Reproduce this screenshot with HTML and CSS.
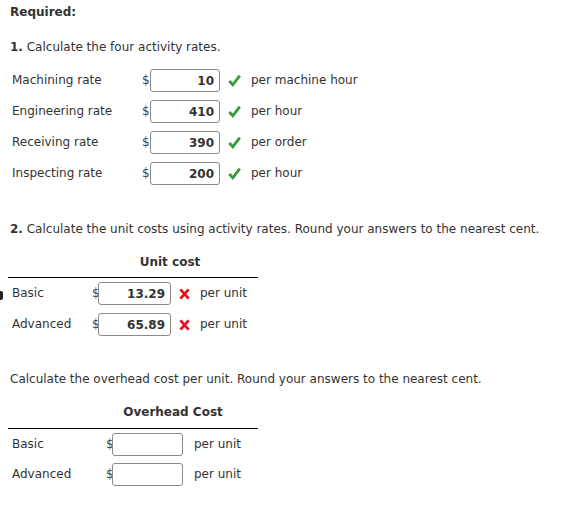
FILE: index.html
```
<!DOCTYPE html>
<html lang="en">
<head>
    <meta charset="UTF-8">
    <title>Required</title>
    <link rel="stylesheet" href="styles.css">
</head>
<body>
    <div class="question">
        <p class="required">Required:</p>

        <p class="part part-one"><b>1.</b> Calculate the four activity rates.</p>

        <div class="rates">
            <div class="rate-row">
                <span class="label">Machining rate</span>
                <span class="dollar">$</span>
                <input class="answer" type="text" value="10">
                <span class="mark"><svg width="13" height="13" viewBox="0 0 13 13"><path d="M1.3 7 L4.8 10.8 L11.8 1.6" fill="none" stroke="#3b9a3b" stroke-width="2.8"/></svg></span>
                <span class="unit">per machine hour</span>
            </div>
            <div class="rate-row">
                <span class="label">Engineering rate</span>
                <span class="dollar">$</span>
                <input class="answer" type="text" value="410">
                <span class="mark"><svg width="13" height="13" viewBox="0 0 13 13"><path d="M1.3 7 L4.8 10.8 L11.8 1.6" fill="none" stroke="#3b9a3b" stroke-width="2.8"/></svg></span>
                <span class="unit">per hour</span>
            </div>
            <div class="rate-row">
                <span class="label">Receiving rate</span>
                <span class="dollar">$</span>
                <input class="answer" type="text" value="390">
                <span class="mark"><svg width="13" height="13" viewBox="0 0 13 13"><path d="M1.3 7 L4.8 10.8 L11.8 1.6" fill="none" stroke="#3b9a3b" stroke-width="2.8"/></svg></span>
                <span class="unit">per order</span>
            </div>
            <div class="rate-row">
                <span class="label">Inspecting rate</span>
                <span class="dollar">$</span>
                <input class="answer" type="text" value="200">
                <span class="mark"><svg width="13" height="13" viewBox="0 0 13 13"><path d="M1.3 7 L4.8 10.8 L11.8 1.6" fill="none" stroke="#3b9a3b" stroke-width="2.8"/></svg></span>
                <span class="unit">per hour</span>
            </div>
        </div>

        <p class="part part-two"><b>2.</b> Calculate the unit costs using activity rates. Round your answers to the nearest cent.</p>

        <div class="cost-table unit-cost">
            <span class="edge-mark"></span>
            <div class="cost-head"><span class="head-text">Unit cost</span></div>
            <div class="cost-row">
                <span class="label">Basic</span>
                <span class="dollar">$</span>
                <input class="answer" type="text" value="13.29">
                <span class="mark"><svg width="11" height="12" viewBox="0 0 11 12"><path d="M1.4 1.4 L9.6 10.6 M9.6 1.4 L1.4 10.6" fill="none" stroke="#e8121b" stroke-width="2.8"/></svg></span>
                <span class="unit">per unit</span>
            </div>
            <div class="cost-row">
                <span class="label">Advanced</span>
                <span class="dollar">$</span>
                <input class="answer" type="text" value="65.89">
                <span class="mark"><svg width="11" height="12" viewBox="0 0 11 12"><path d="M1.4 1.4 L9.6 10.6 M9.6 1.4 L1.4 10.6" fill="none" stroke="#e8121b" stroke-width="2.8"/></svg></span>
                <span class="unit">per unit</span>
            </div>
        </div>

        <p class="part part-three">Calculate the overhead cost per unit. Round your answers to the nearest cent.</p>

        <div class="cost-table overhead-cost">
            <div class="cost-head"><span class="head-text">Overhead Cost</span></div>
            <div class="cost-row">
                <span class="label">Basic</span>
                <span class="dollar">$</span>
                <input class="answer" type="text" value="">
                <span class="unit">per unit</span>
            </div>
            <div class="cost-row">
                <span class="label">Advanced</span>
                <span class="dollar">$</span>
                <input class="answer" type="text" value="">
                <span class="unit">per unit</span>
            </div>
        </div>
    </div>
</body>
</html>
```

FILE: styles.css
```
body {
    margin: 0;
    padding: 0;
    background: #fff;
    font-family: "DejaVu Sans", Verdana, sans-serif;
    font-size: 12px;
    line-height: 15px;
    color: #333;
}
.question {
    padding: 5px 10px 0 10px;
}
p {
    margin: 0;
}
.required {
    font-weight: bold;
}
.part-one {
    margin-top: 20px;
}
.part-two {
    margin-top: 33px;
}
.part-three {
    margin-top: 32px;
}
.rates {
    margin-top: 10px;
    padding-left: 2px;
}
.rate-row {
    display: grid;
    grid-template-columns: 130px 8px 70px 31px auto;
    align-items: center;
    height: 31px;
}
.dollar {
    color: #444;
}
.unit {
    white-space: nowrap;
}
.answer {
    box-sizing: border-box;
    width: 70px;
    height: 23px;
    margin: 0;
    padding: 0 5px;
    border: 1px solid #8a8a8a;
    border-radius: 3px;
    font-family: "DejaVu Sans", Verdana, sans-serif;
    font-size: 12px;
    font-weight: bold;
    color: #333;
    text-align: right;
    background: #fff;
}
.mark {
    display: flex;
    justify-content: center;
    padding-right: 2px;
}
.mark svg {
    display: block;
}
.cost-table {
    position: relative;
    width: 250px;
    margin-left: -2px;
    padding-top: 18px;
}
.cost-head {
    display: flex;
    justify-content: center;
    padding-bottom: 7px;
    border-bottom: 1px solid #000;
    font-weight: bold;
}
.unit-cost .cost-head {
    padding-left: 74px;
}
.cost-row {
    display: grid;
    align-items: center;
    height: 31px;
    padding-left: 4px;
}
.unit-cost .cost-row {
    grid-template-columns: 80px 6px 73px 29px auto;
}
.unit-cost .answer {
    width: 73px;
}
.overhead-cost .cost-head {
    padding-left: 80px;
    padding-bottom: 8px;
}
.overhead-cost .cost-row {
    grid-template-columns: 94px 6px 82px auto;
    height: 30px;
}
.overhead-cost .answer {
    width: 71px;
}
.edge-mark {
    position: absolute;
    left: -8px;
    top: 54px;
    width: 3px;
    height: 9px;
    background: #222;
    border-radius: 0 2px 2px 0;
}
```
